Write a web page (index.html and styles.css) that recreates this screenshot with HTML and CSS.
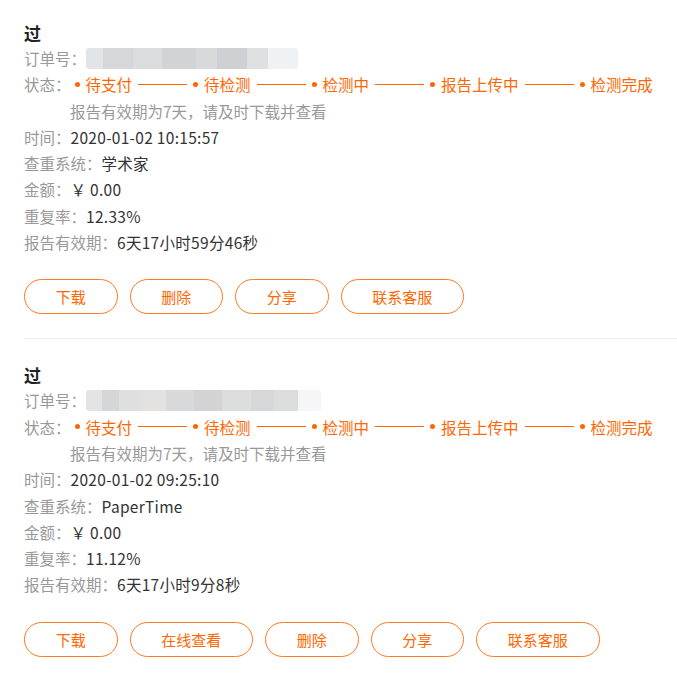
FILE: index.html
```html
<!DOCTYPE html>
<html lang="zh-CN">
<head>
    <meta charset="UTF-8">
    <meta name="viewport" content="width=device-width, initial-scale=1.0">
    <title>我的订单</title>
    <link rel="stylesheet" href="styles.css">
</head>
<body>
    <div class="order-list">
        <div class="order">
            <h3 class="order-title">过</h3>
            <div class="row"><span class="label">订单号：</span><span class="mosaic mosaic-1"></span></div>
            <div class="row steps">
                <span class="label">状态：</span>
                <span class="dot"></span><span class="step">待支付</span><span class="line"></span>
                <span class="dot"></span><span class="step">待检测</span><span class="line"></span>
                <span class="dot"></span><span class="step">检测中</span><span class="line"></span>
                <span class="dot"></span><span class="step">报告上传中</span><span class="line"></span>
                <span class="dot"></span><span class="step">检测完成</span>
            </div>
            <div class="row note">报告有效期为7天，请及时下载并查看</div>
            <div class="row"><span class="label">时间：</span><span class="value">2020-01-02 10:15:57</span></div>
            <div class="row"><span class="label">查重系统：</span><span class="value">学术家</span></div>
            <div class="row"><span class="label">金额：</span><span class="value">￥ 0.00</span></div>
            <div class="row"><span class="label">重复率：</span><span class="value">12.33%</span></div>
            <div class="row"><span class="label">报告有效期：</span><span class="value">6天17小时59分46秒</span></div>
            <div class="actions">
                <button class="btn">下载</button>
                <button class="btn">删除</button>
                <button class="btn">分享</button>
                <button class="btn">联系客服</button>
            </div>
        </div>

        <div class="order">
            <h3 class="order-title">过</h3>
            <div class="row"><span class="label">订单号：</span><span class="mosaic mosaic-2"></span></div>
            <div class="row steps">
                <span class="label">状态：</span>
                <span class="dot"></span><span class="step">待支付</span><span class="line"></span>
                <span class="dot"></span><span class="step">待检测</span><span class="line"></span>
                <span class="dot"></span><span class="step">检测中</span><span class="line"></span>
                <span class="dot"></span><span class="step">报告上传中</span><span class="line"></span>
                <span class="dot"></span><span class="step">检测完成</span>
            </div>
            <div class="row note">报告有效期为7天，请及时下载并查看</div>
            <div class="row"><span class="label">时间：</span><span class="value">2020-01-02 09:25:10</span></div>
            <div class="row"><span class="label">查重系统：</span><span class="value">PaperTime</span></div>
            <div class="row"><span class="label">金额：</span><span class="value">￥ 0.00</span></div>
            <div class="row"><span class="label">重复率：</span><span class="value">11.12%</span></div>
            <div class="row"><span class="label">报告有效期：</span><span class="value">6天17小时9分8秒</span></div>
            <div class="actions">
                <button class="btn">下载</button>
                <button class="btn">在线查看</button>
                <button class="btn">删除</button>
                <button class="btn">分享</button>
                <button class="btn">联系客服</button>
            </div>
        </div>
    </div>
</body>
</html>
```

FILE: styles.css
```css
/* Order list */
body {
    font-family: "Noto Sans CJK SC", "Noto Sans", sans-serif;
    background-color: #fff;
    margin: 0;
    color: #333;
}
.order-list {
    padding-left: 24px;
}
.order {
    padding: 24px 0 24px;
    border-bottom: 1px solid #eee;
}
.order:first-child {
    padding-top: 21px;
}
.order:last-child {
    border-bottom: none;
}
.order-title {
    margin: 0;
    font-size: 17px;
    line-height: 24px;
    font-weight: bold;
    color: #222;
}
.row {
    display: flex;
    align-items: center;
    font-size: 15.5px;
    line-height: 26.3px;
    height: 26.3px;
    white-space: nowrap;
}
.label {
    color: #999;
}
.value {
    color: #333;
    letter-spacing: 0.3px;
}
.note {
    color: #999;
    padding-left: 46px;
}
.steps {
    gap: 6px;
}
.steps .label {
    margin-right: -2px;
}
.dot {
    width: 5px;
    height: 5px;
    border-radius: 50%;
    background: #ff6600;
}
.step {
    color: #ff6600;
}
.line {
    width: 49px;
    height: 1px;
    background: #ff6600;
}
.mosaic {
    display: inline-block;
    height: 21px;
    border-radius: 3px;
}
.mosaic-1 {
    width: 212px;
    background: linear-gradient(90deg, #e3e4e6 0 8%, #d6d7d9 8% 22%, #dbdcdd 22% 36%, #d2d3d5 36% 52%, #d8d9db 52% 62%, #cfd0d3 62% 76%, #dfe0e2 76% 86%, #f0f1f3 86% 100%);
}
.mosaic-2 {
    width: 235px;
    background: linear-gradient(90deg, #e2e4e5 0 7%, #d5d6d8 7% 14%, #dde0df 14% 24%, #e3e2e0 24% 34%, #d8d9db 34% 46%, #d3d3d6 46% 58%, #dcdedd 58% 70%, #d6d7d9 70% 80%, #dbdcdc 80% 90%, #f5f6f8 90% 100%);
}
.actions {
    display: flex;
    gap: 12px;
    margin-top: 24px;
}
.btn {
    height: 35px;
    padding: 0 30.75px;
    border: 1px solid #ff7a22;
    border-radius: 18px;
    background: #fff;
    color: #ff6600;
    font-family: inherit;
    font-size: 15px;
    cursor: pointer;
}
```
